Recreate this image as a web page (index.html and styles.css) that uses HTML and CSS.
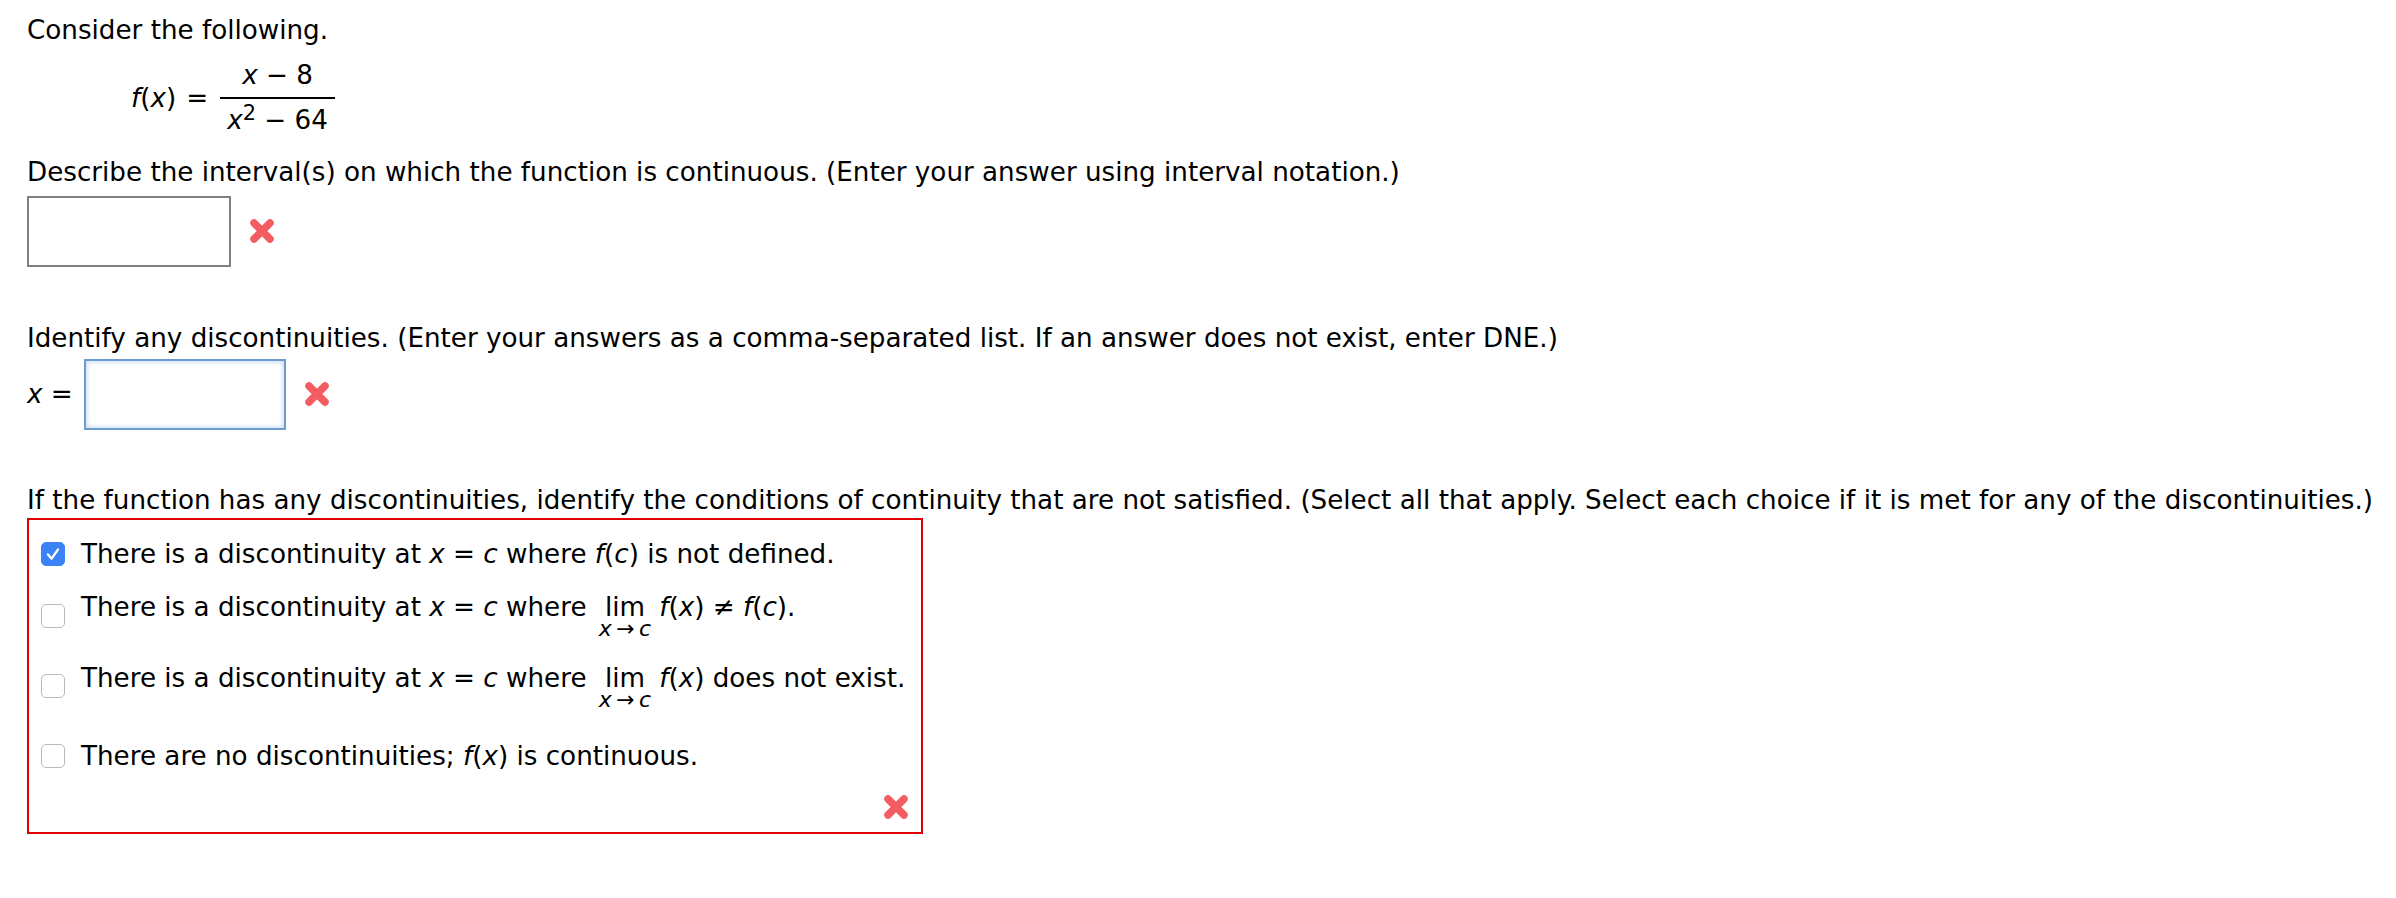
FILE: index.html
```html
<!DOCTYPE html>
<html>
<head>
<meta charset="utf-8">
<title>Continuity</title>
<link rel="stylesheet" href="styles.css">
</head>
<body>
<div class="page">
  <p class="line first">Consider the following.</p>
  <div class="eq">
    <span class="lhs"><i>f</i>(<i>x</i>)</span><span class="eqsign">=</span>
    <span class="frac"><span class="num"><i>x</i> − 8</span><span class="den"><i>x</i><sup>2</sup> − 64</span></span>
  </div>
  <p class="line describe">Describe the interval(s) on which the function is continuous. (Enter your answer using interval notation.)</p>
  <div class="ans ans1">
    <span class="box gray"></span>
    <svg class="wrong" viewBox="0 0 30 30" width="30" height="30"><path d="M7 7 L23 23 M23 7 L7 23" /></svg>
  </div>
  <p class="line identify">Identify any discontinuities. (Enter your answers as a comma-separated list. If an answer does not exist, enter DNE.)</p>
  <div class="ans ans2">
    <span class="lbl"><i>x</i> =</span>
    <span class="box blue"></span>
    <svg class="wrong" viewBox="0 0 30 30" width="30" height="30"><path d="M7 7 L23 23 M23 7 L7 23" /></svg>
  </div>
  <p class="line ifthe">If the function has any discontinuities, identify the conditions of continuity that are not satisfied. (Select all that apply. Select each choice if it is met for any of the discontinuities.)</p>
  <div class="choices">
    <div class="choice c1">
      <span class="cb checked"><svg viewBox="0 0 24 24" width="24" height="24"><path d="M6.5 12.5 L10.5 17 L17.5 7" /></svg></span>
      <span class="ct">There is a discontinuity at <i>x</i> = <i>c</i> where <i>f</i>(<i>c</i>) is not defined.</span>
    </div>
    <div class="choice c2">
      <span class="cb"></span>
      <span class="ct">There is a discontinuity at <i>x</i> = <i>c</i> where <span class="lim"><span class="limtop">lim</span><span class="limsub"><i>x</i>&thinsp;→&thinsp;<i>c</i></span></span><i>f</i>(<i>x</i>) ≠ <i>f</i>(<i>c</i>).</span>
    </div>
    <div class="choice c3">
      <span class="cb"></span>
      <span class="ct">There is a discontinuity at <i>x</i> = <i>c</i> where <span class="lim"><span class="limtop">lim</span><span class="limsub"><i>x</i>&thinsp;→&thinsp;<i>c</i></span></span><i>f</i>(<i>x</i>) does not exist.</span>
    </div>
    <div class="choice c4">
      <span class="cb"></span>
      <span class="ct">There are no discontinuities; <i>f</i>(<i>x</i>) is continuous.</span>
    </div>
    <div class="markrow">
      <svg class="wrong" viewBox="0 0 30 30" width="30" height="30"><path d="M7 7 L23 23 M23 7 L7 23" /></svg>
    </div>
  </div>
</div>
</body>
</html>
```

FILE: styles.css
```css
html, body {
  margin: 0;
  padding: 0;
  background: #ffffff;
}

body {
  font-family: "DejaVu Sans", Verdana, sans-serif;
  font-size: 26.2px;
  line-height: 32px;
  color: #000000;
}

.page {
  padding-left: 27px;
}

.line {
  margin: 0;
  white-space: nowrap;
}

.first {
  padding-top: 13.5px;
}

.eq {
  display: flex;
  align-items: center;
  margin-top: 13px;
  padding-left: 104px;
}

.lhs {
  white-space: nowrap;
}

.eqsign {
  margin-left: 10px;
}

.frac {
  display: inline-flex;
  flex-direction: column;
  align-items: center;
  margin-left: 12px;
}

.num {
  padding: 0 8px 6px 8px;
}

.den {
  border-top: 2px solid #000;
  padding: 5px 7px 1.5px 7px;
}

.den sup {
  font-size: 0.8em;
  line-height: 0;
  vertical-align: 0.42em;
}

.describe {
  margin-top: 18.5px;
}

.ans {
  display: flex;
  align-items: center;
}

.ans1 {
  margin-top: 8px;
}

.box {
  display: block;
  height: 71px;
  box-sizing: border-box;
  background: #fff;
}

.gray {
  width: 204px;
  border: 2px solid #7f7f7f;
}

.blue {
  width: 202px;
  border: 2px solid #6e9bcf;
  box-shadow: inset 0 0 5px 1px #c6dcf3;
}

.wrong {
  margin-left: 16px;
  display: block;
}

.wrong path {
  fill: none;
  stroke: #f35c61;
  stroke-width: 7.5;
  stroke-linecap: round;
}

.identify {
  margin-top: 55px;
}

.ans2 {
  margin-top: 5px;
}

.lbl {
  width: 57px;
  white-space: nowrap;
}

.ifthe {
  margin-top: 54.5px;
}

.choices {
  margin-top: 1.5px;
  width: 896px;
  box-sizing: border-box;
  border: 2px solid #dd0000;
  padding: 18px 10px 9.5px 12px;
}

.choice {
  display: flex;
  align-items: center;
  gap: 16px;
  white-space: nowrap;
}

.c2 {
  margin-top: 21.5px;
}

.c3 {
  margin-top: 21.5px;
}

.c4 {
  margin-top: 29px;
}

.cb {
  flex: none;
  width: 24px;
  height: 24px;
  box-sizing: border-box;
  border: 1.5px solid #b9b9b9;
  border-radius: 5px;
  background: #fff;
  display: flex;
  align-items: center;
  justify-content: center;
}

.cb.checked {
  background: #3b82f6;
  border-color: #3b82f6;
}

.cb svg path {
  fill: none;
  stroke: #ffffff;
  stroke-width: 2.6;
  stroke-linecap: round;
  stroke-linejoin: round;
}

.lim {
  display: inline-flex;
  flex-direction: column;
  align-items: center;
  margin: 0 8px 0 4px;
}

.limtop {
  line-height: 21px;
}

.limsub {
  font-size: 22px;
  line-height: 22px;
}

.markrow {
  display: flex;
  justify-content: flex-end;
  margin-top: 20.5px;
}

.markrow .wrong {
  margin-left: 0;
}
```
